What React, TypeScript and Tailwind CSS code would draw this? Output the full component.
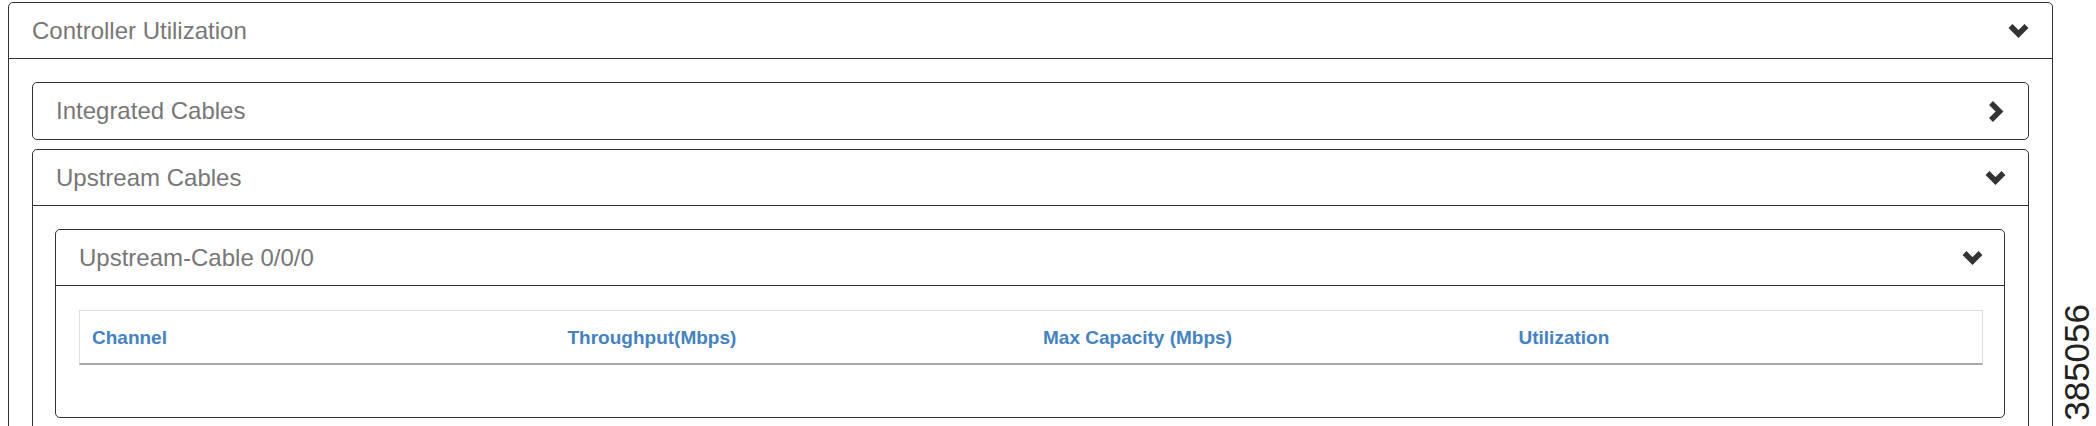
import type { ReactNode } from "react";

const font = { fontFamily: '"Liberation Sans", Arial, sans-serif' };

function ChevronDown() {
  return (
    <svg width="21" height="15" viewBox="0 0 21 15" className="shrink-0">
      <polyline points="2.5,3 10.5,11 18.5,3" fill="none" stroke="#333" strokeWidth="5.5" strokeLinejoin="miter" />
    </svg>
  );
}

function ChevronRight() {
  return (
    <svg width="21" height="23" viewBox="0 0 21 23" className="shrink-0">
      <polyline points="6,3 14.5,11.5 6,20" fill="none" stroke="#333" strokeWidth="5.5" strokeLinejoin="miter" />
    </svg>
  );
}

function Panel({
  title,
  open,
  pr = "pr-[23px]",
  children,
  className = "",
}: {
  title: string;
  open: boolean;
  pr?: string;
  children?: ReactNode;
  className?: string;
}) {
  return (
    <div className={`border border-[#333] rounded-[5px] bg-white ${className}`}>
      <div className={`flex items-center justify-between pl-[23px] h-[56px] ${pr} ${open ? "border-b border-[#333]" : ""}`}>
        <span className="text-[24px] text-[#777] leading-none">{title}</span>
        {open ? <ChevronDown /> : <ChevronRight />}
      </div>
      {open && children}
    </div>
  );
}

const columns = ["Channel", "Throughput(Mbps)", "Max Capacity (Mbps)", "Utilization"];

export default function App() {
  return (
    <div className="bg-white min-h-[426px] overflow-hidden" style={font}>
      <div className="flex pt-[2px] pl-[8px]">
        <Panel title="Controller Utilization" open className="w-[2045px] shrink-0">
          <div className="px-[23px] pt-[23px] pb-[40px]">
            <Panel title="Integrated Cables" open={false} pr="pr-[22px]" />
            <Panel title="Upstream Cables" open pr="pr-[22px]" className="mt-[9px]">
              <div className="pl-[22px] pr-[23px] pt-[23px] pb-[30px]">
                <Panel title="Upstream-Cable 0/0/0" open pr="pr-[21px]">
                  <div className="pl-[23px] pr-[21px] pt-[24px] pb-[52px]">
                    <div className="grid grid-cols-4 border border-[#ddd] border-b-2 border-b-[#aaa] h-[55px] items-center">
                      {columns.map((c) => (
                        <div key={c} className="px-[12px] text-[19px] font-bold text-[#4582c0] leading-none">
                          {c}
                        </div>
                      ))}
                    </div>
                  </div>
                </Panel>
              </div>
            </Panel>
          </div>
        </Panel>
        <div className="pl-[6px] pt-[302px]">
          <div className="[writing-mode:vertical-rl] rotate-180 text-[35px] leading-none text-[#222]">385056</div>
        </div>
      </div>
    </div>
  );
}
